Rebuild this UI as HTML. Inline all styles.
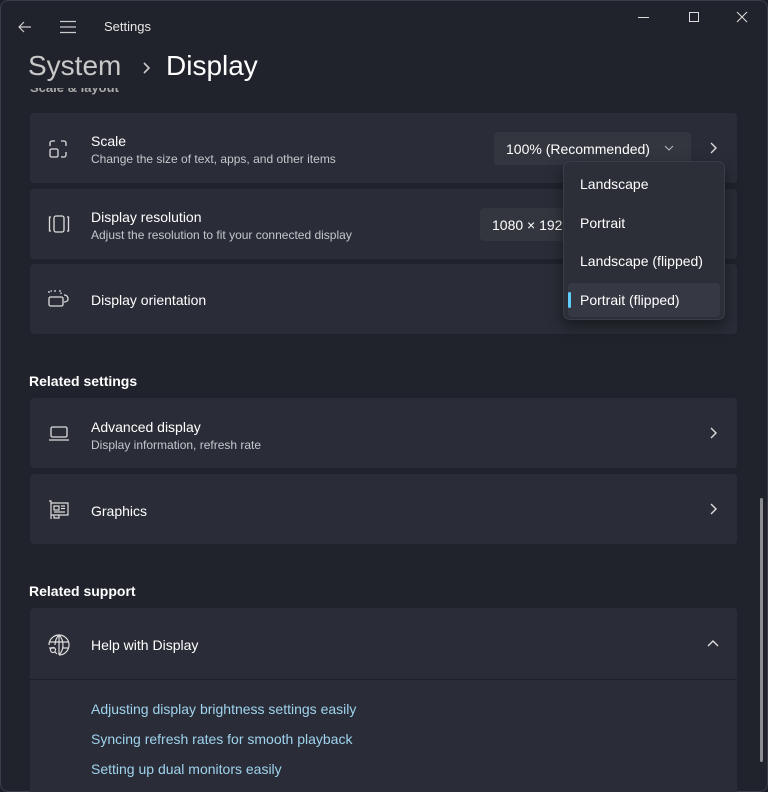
<!DOCTYPE html>
<html><head><style>
*{box-sizing:border-box;margin:0;padding:0}
body{width:768px;height:792px;background:#1c1f27;font-family:"Liberation Sans",sans-serif;color:#fff;overflow:hidden;position:relative}
.win{position:absolute;left:0;top:0;width:768px;height:792px;background:#20232b;box-shadow:inset 0 0 0 1px #3a3d48;border-radius:8px;overflow:hidden}
.abs{position:absolute}
.card{position:absolute;left:30px;width:707px;background:#2a2d37;border-radius:4px}
.t{position:absolute;left:61px;font-size:14px;color:#fff}
.s{position:absolute;left:61px;font-size:12px;color:#c5c7cc}
.ic{position:absolute;left:18px}
.chev{position:absolute;right:20px;top:50%;margin-top:-6px}
.hd{position:absolute;left:29px;font-size:14px;font-weight:bold;color:#fff}
.lnk{position:absolute;left:91px;font-size:14px;color:#9fd3ee}
svg{display:block}
</style></head><body><div class="win">
<svg class="abs" style="left:17px;top:19px" width="16" height="16" viewBox="0 0 16 16" fill="none" stroke="#ccc" stroke-width="1.2"><path d="M14 8H2M7 3L2 8l5 5"/></svg>
<svg class="abs" style="left:60px;top:20px" width="16" height="14" viewBox="0 0 16 14" stroke="#ccc" stroke-width="1.2"><path d="M0 1.5h16M0 7h16M0 12.5h16"/></svg>
<div class="abs" style="left:104px;top:19px;font-size:13px;color:#e6e6e6">Settings</div>
<svg class="abs" style="left:638px;top:10px" width="110" height="16" viewBox="0 0 110 16" fill="none" stroke="#ddd" stroke-width="1"><path d="M0 7.5h11"/><rect x="51.5" y="2.5" width="9" height="9"/><path d="M99 2l10 10M109 2l-10 10"/></svg>
<div class="abs" style="left:28px;top:50px;font-size:28px;color:#c8c8c8;font-weight:500">System</div>
<svg class="abs" style="left:141px;top:61px" width="10" height="14" viewBox="0 0 10 14" fill="none" stroke="#ccc" stroke-width="1.6"><path d="M3 2l5 5-5 5"/></svg>
<div class="abs" style="left:166px;top:50px;font-size:28px;color:#fff">Display</div>
<div class="abs" style="left:30px;top:88px;width:100px;height:8px;overflow:hidden"><div style="font-size:13px;color:#aaa;margin-top:-8px;font-weight:bold">Scale &amp; layout</div></div>

<div class="card" style="top:113px;height:70px">
<svg class="ic" style="top:26px" width="20" height="20" viewBox="0 0 20 20" fill="none" stroke="#ddd" stroke-width="1.3"><path d="M2 7V4a2 2 0 0 1 2-2h3M13 2h3a2 2 0 0 1 2 2v3M18 13v3a2 2 0 0 1-2 2h-3"/><rect x="2" y="10" width="8" height="8" rx="1.5"/></svg>
<div class="t" style="top:20px">Scale</div><div class="s" style="top:39px">Change the size of text, apps, and other items</div>
<div class="abs" style="left:464px;top:19px;width:197px;height:33px;background:#33363f;border-radius:4px;font-size:14px;color:#fff;padding:9px 0 0 12px">100% (Recommended)</div>
<svg class="abs" style="left:634px;top:31px" width="10" height="8" viewBox="0 0 10 8" fill="none" stroke="#bbb" stroke-width="1"><path d="M1 2l4 4 4-4"/></svg>
<svg class="chev" width="8" height="12" viewBox="0 0 8 12" fill="none" stroke="#ddd" stroke-width="1.4"><path d="M2 1l5 5-5 5"/></svg>
</div>
<div class="card" style="top:189px;height:70px">
<svg class="ic" style="top:25px" width="22" height="20" viewBox="0 0 22 20" fill="none" stroke="#ddd" stroke-width="1.3"><rect x="6" y="2" width="10" height="16" rx="2"/><path d="M3 3H1.5v14H3M19 3h1.5v14H19"/></svg>
<div class="t" style="top:20px">Display resolution</div><div class="s" style="top:39px">Adjust the resolution to fit your connected display</div>
<div class="abs" style="left:450px;top:19px;width:120px;height:33px;background:#33363f;border-radius:4px;font-size:14px;color:#fff;padding:9px 0 0 12px">1080 × 1920</div>
</div>
<div class="card" style="top:264px;height:70px">
<svg class="ic" style="top:25px" width="22" height="20" viewBox="0 0 22 20" fill="none" stroke="#ddd" stroke-width="1.3"><path d="M1 4V2h3M6 2h3M11 2h2v3" stroke-dasharray="2 1.5"/><rect x="1" y="8" width="14" height="9" rx="1.5"/><path d="M16 6c3 0 4 2 4 4s-2 3-4 3"/></svg>
<div class="t" style="top:28px">Display orientation</div>
</div>

<div class="abs" style="left:563px;top:161px;width:162px;height:159px;background:#2c2f38;border:1px solid #3a3d47;border-radius:7px;box-shadow:0 6px 16px rgba(0,0,0,.45)">
<div class="abs" style="left:16px;top:14px;font-size:14px">Landscape</div>
<div class="abs" style="left:16px;top:53px;font-size:14px">Portrait</div>
<div class="abs" style="left:16px;top:91px;font-size:14px">Landscape (flipped)</div>
<div class="abs" style="left:4px;top:121px;width:152px;height:34px;background:#363944;border-radius:4px"></div>
<div class="abs" style="left:4px;top:130px;width:3px;height:16px;background:#60cdff;border-radius:2px"></div>
<div class="abs" style="left:16px;top:130px;font-size:14px">Portrait (flipped)</div>
</div>

<div class="hd" style="top:373px">Related settings</div>
<div class="card" style="top:398px;height:70px">
<svg class="ic" style="top:26px" width="22" height="18" viewBox="0 0 22 18" fill="none" stroke="#ddd" stroke-width="1.3"><rect x="3" y="3" width="16" height="10" rx="1.5"/><path d="M1 16h20"/></svg>
<div class="t" style="top:21px">Advanced display</div><div class="s" style="top:40px">Display information, refresh rate</div>
<svg class="chev" width="8" height="12" viewBox="0 0 8 12" fill="none" stroke="#ddd" stroke-width="1.4"><path d="M2 1l5 5-5 5"/></svg>
</div>
<div class="card" style="top:474px;height:70px">
<svg class="ic" style="top:26px" width="22" height="20" viewBox="0 0 22 20" fill="none" stroke="#ddd" stroke-width="1.2"><path d="M1 1h2v18M3 3h17v12H3M6 15v3h5v-3"/><rect x="6" y="6" width="5" height="4"/><path d="M13 6h4M13 8.5h4M6 12h11"/></svg>
<div class="t" style="top:29px">Graphics</div>
<svg class="chev" width="8" height="12" viewBox="0 0 8 12" fill="none" stroke="#ddd" stroke-width="1.4"><path d="M2 1l5 5-5 5"/></svg>
</div>

<div class="hd" style="top:583px">Related support</div>
<div class="card" style="top:608px;height:200px">
<svg class="ic" style="top:26px" width="22" height="22" viewBox="0 0 22 22" fill="none" stroke="#ddd" stroke-width="1.2"><path d="M11 1a10 10 0 1 1 0 20M11 1a10 10 0 0 0-10 10M11 1c-3 3-4 6-4 10M11 1c3 3 4 6 4 10s-1 7-4 10M1 8h20M1 14h6M14 14h7M11 1v20"/><circle cx="5" cy="16" r="2.5"/><path d="M7 18l2 2"/></svg>
<div class="t" style="top:29px">Help with Display</div>
<svg class="abs" style="right:18px;top:31px" width="12" height="8" viewBox="0 0 12 8" fill="none" stroke="#ddd" stroke-width="1.4"><path d="M1 7l5-5 5 5"/></svg>
<div class="abs" style="left:0;top:71px;width:707px;height:1px;background:#1e2128"></div>
</div>
<div class="lnk" style="top:701px">Adjusting display brightness settings easily</div>
<div class="lnk" style="top:731px">Syncing refresh rates for smooth playback</div>
<div class="lnk" style="top:761px">Setting up dual monitors easily</div>
<div class="abs" style="left:760px;top:498px;width:3px;height:264px;background:#8a8c92;border-radius:2px"></div>
</div></body></html>
